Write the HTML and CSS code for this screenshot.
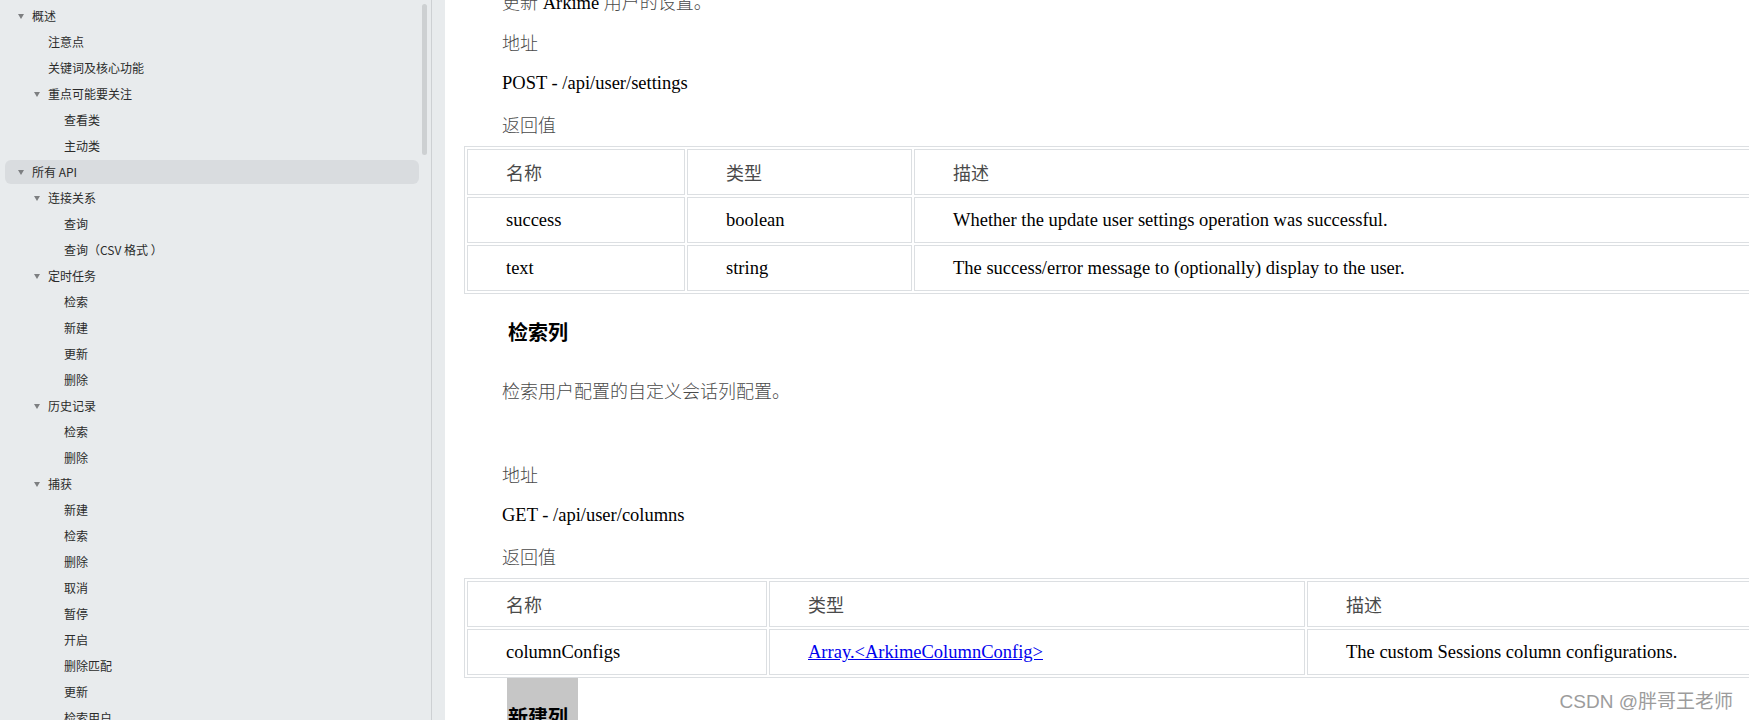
FILE: index.html
```html
<!DOCTYPE html>
<html lang="zh-CN">
<head>
<meta charset="utf-8">
<title>Arkime API</title>
<link rel="stylesheet" href="styles.css">
</head>
<body>
<div class="app">
  <aside class="sidebar">
    <nav class="toc">
      <div class="item lvl0 has-kids"><span class="tog"></span><span class="label">概述</span></div>
      <div class="item lvl1"><span class="tog"></span><span class="label">注意点</span></div>
      <div class="item lvl1"><span class="tog"></span><span class="label">关键词及核心功能</span></div>
      <div class="item lvl1 has-kids"><span class="tog"></span><span class="label">重点可能要关注</span></div>
      <div class="item lvl2"><span class="tog"></span><span class="label">查看类</span></div>
      <div class="item lvl2"><span class="tog"></span><span class="label">主动类</span></div>
      <div class="item lvl0 has-kids active"><span class="tog"></span><span class="label">所有 API</span></div>
      <div class="item lvl1 has-kids"><span class="tog"></span><span class="label">连接关系</span></div>
      <div class="item lvl2"><span class="tog"></span><span class="label">查询</span></div>
      <div class="item lvl2"><span class="tog"></span><span class="label">查询（CSV 格式 ）</span></div>
      <div class="item lvl1 has-kids"><span class="tog"></span><span class="label">定时任务</span></div>
      <div class="item lvl2"><span class="tog"></span><span class="label">检索</span></div>
      <div class="item lvl2"><span class="tog"></span><span class="label">新建</span></div>
      <div class="item lvl2"><span class="tog"></span><span class="label">更新</span></div>
      <div class="item lvl2"><span class="tog"></span><span class="label">删除</span></div>
      <div class="item lvl1 has-kids"><span class="tog"></span><span class="label">历史记录</span></div>
      <div class="item lvl2"><span class="tog"></span><span class="label">检索</span></div>
      <div class="item lvl2"><span class="tog"></span><span class="label">删除</span></div>
      <div class="item lvl1 has-kids"><span class="tog"></span><span class="label">捕获</span></div>
      <div class="item lvl2"><span class="tog"></span><span class="label">新建</span></div>
      <div class="item lvl2"><span class="tog"></span><span class="label">检索</span></div>
      <div class="item lvl2"><span class="tog"></span><span class="label">删除</span></div>
      <div class="item lvl2"><span class="tog"></span><span class="label">取消</span></div>
      <div class="item lvl2"><span class="tog"></span><span class="label">暂停</span></div>
      <div class="item lvl2"><span class="tog"></span><span class="label">开启</span></div>
      <div class="item lvl2"><span class="tog"></span><span class="label">删除匹配</span></div>
      <div class="item lvl2"><span class="tog"></span><span class="label">更新</span></div>
      <div class="item lvl2"><span class="tog"></span><span class="label">检索用户</span></div>
    </nav>
    <div class="thumb"></div>
  </aside>
  <div class="gutter"></div>
  <main class="doc">
    <div class="doc-inner">
      <p class="para first"><span class="zh">更新</span> Arkime <span class="zh">用户的设置。</span></p>
      <p class="para zh">地址</p>
      <p class="para">POST - /api/user/settings</p>
      <p class="para zh before-table">返回值</p>
      <table class="api">
        <colgroup><col class="t1c1"><col class="t1c2"><col></colgroup>
        <thead>
          <tr><th class="zh">名称</th><th class="zh">类型</th><th class="zh">描述</th></tr>
        </thead>
        <tbody>
          <tr><td>success</td><td>boolean</td><td>Whether the update user settings operation was successful.</td></tr>
          <tr><td>text</td><td>string</td><td>The success/error message to (optionally) display to the user.</td></tr>
        </tbody>
      </table>
      <h3 class="heading">检索列</h3>
      <p class="para zh gap-lg">检索用户配置的自定义会话列配置。</p>
      <p class="para zh">地址</p>
      <p class="para">GET - /api/user/columns</p>
      <p class="para zh before-table">返回值</p>
      <table class="api last">
        <colgroup><col class="t2c1"><col class="t2c2"><col></colgroup>
        <thead>
          <tr><th class="zh">名称</th><th class="zh">类型</th><th class="zh">描述</th></tr>
        </thead>
        <tbody>
          <tr><td>columnConfigs</td><td><a class="link" href="#">Array.&lt;ArkimeColumnConfig&gt;</a></td><td>The custom Sessions column configurations.</td></tr>
        </tbody>
      </table>
      <h3 class="heading marked">新建列</h3>
    </div>
  </main>
  <div class="watermark">CSDN @胖哥王老师</div>
</div>
</body>
</html>
```

FILE: styles.css
```css
html, body {
  margin: 0;
  padding: 0;
  height: 100%;
  overflow: hidden;
  background: #ffffff;
}

.app {
  position: relative;
  display: flex;
  height: 720px;
  overflow: hidden;
}

/* ---------- sidebar ---------- */
.sidebar {
  position: relative;
  flex: 0 0 431px;
  width: 431px;
  background: #e8ebed;
  border-right: 1px solid #cdd0d3;
  overflow: hidden;
  font-family: "Noto Sans CJK SC", "Noto Sans", sans-serif;
  font-size: 12px;
  color: #2b2b2b;
}

.toc {
  display: flex;
  flex-direction: column;
  padding-top: 4px;
}

.item {
  display: flex;
  align-items: center;
  height: 24px;
  margin: 0 12px 2px 5px;
  border-radius: 6px;
  white-space: nowrap;
  flex: none;
}

.item.lvl0 { padding-left: 13px; }
.item.lvl1 { padding-left: 29px; }
.item.lvl2 { padding-left: 45px; }

.item.active {
  background: #d9dcdf;
}

.tog {
  flex: 0 0 14px;
  width: 14px;
  height: 24px;
  display: flex;
  align-items: center;
}

.has-kids .tog::before {
  content: "";
  display: block;
  width: 0;
  height: 0;
  border-left: 3.5px solid transparent;
  border-right: 3.5px solid transparent;
  border-top: 5px solid #7d7f81;
  margin-top: 1px;
}

.label {
  line-height: 24px;
}

.thumb {
  position: absolute;
  top: 4px;
  right: 4px;
  width: 5px;
  height: 151px;
  border-radius: 3px;
  background: #cdd0d2;
}

.gutter {
  flex: 0 0 13px;
  background: #e8ebed;
}

/* ---------- document ---------- */
.doc {
  flex: 1 1 auto;
  min-width: 0;
  overflow: hidden;
  background: #ffffff;
  font-family: "Liberation Serif", "Noto Sans CJK SC", serif;
  font-size: 18.5px;
  color: #000000;
}

.doc-inner {
  padding-left: 19px;
}

.para {
  margin: 0 0 17px 38px;
  height: 24px;
  line-height: 24px;
  white-space: nowrap;
}

.para.first {
  margin-top: -11px;
}

.para.before-table {
  margin-bottom: 10px;
}

.para.gap-lg {
  margin-bottom: 60px;
}

.zh {
  font-family: "Noto Sans CJK SC", sans-serif;
  font-size: 18px;
  font-weight: 300;
  color: #4a4a4a;
}

.api {
  width: 1500px;
  table-layout: fixed;
  border-collapse: separate;
  border-spacing: 2px;
  border: 1px solid #dcdfe2;
  margin: 0 0 24px 0;
}

.api.last {
  margin-bottom: 0;
}

.t1c1 { width: 218px; }
.t1c2 { width: 225px; }
.t2c1 { width: 300px; }
.t2c2 { width: 536px; }

.api th,
.api td {
  border: 1px solid #dcdfe2;
  height: 24px;
  padding: 10px 10px 10px 38px;
  line-height: 24px;
  text-align: left;
  font-weight: normal;
  white-space: nowrap;
  overflow: hidden;
}

.link {
  color: #0000ee;
  text-decoration: underline;
}

.heading {
  margin: 0 0 32px 44px;
  font-family: "Noto Sans CJK SC", sans-serif;
  font-size: 20px;
  font-weight: 700;
  line-height: 28px;
  color: #000000;
}

.heading.marked {
  display: inline-block;
  margin: 0 0 0 43px;
  padding: 25px 10px 20px 1px;
  background: #c6c6c6;
}

/* ---------- watermark ---------- */
.watermark {
  position: absolute;
  right: 16px;
  bottom: 7px;
  font-family: "Liberation Sans", "Noto Sans CJK SC", sans-serif;
  font-size: 19px;
  line-height: 22px;
  color: #9c9c9c;
  white-space: nowrap;
}
```
